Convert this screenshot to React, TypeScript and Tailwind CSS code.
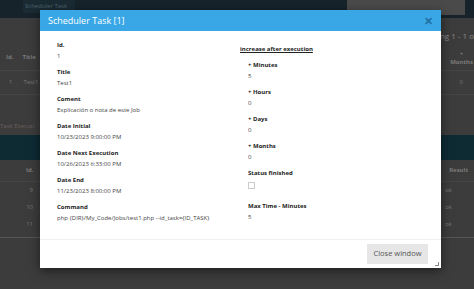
import React from 'react'

const leftFields = [
    { label: 'Id.', value: '1' },
    { label: 'Title', value: 'Test1' },
    { label: 'Coment', value: 'Explicación o nota de este Job' },
    { label: 'Date Initial', value: '10/23/2023 9:00:00 PM' },
    { label: 'Date Next Execution', value: '10/26/2023 6:33:00 PM' },
    { label: 'Date End', value: '11/23/2023 8:00:00 PM' },
    { label: 'Command', value: 'php {DIR}/My_Code/Jobs/test1.php --id_task={ID_TASK}' },
]

const rightFields = [
    { label: '+ Minutes', value: '5' },
    { label: '+ Hours', value: '0' },
    { label: '+ Days', value: '0' },
    { label: '+ Months', value: '0' },
]

const Field = ({ label, value }: { label: string; value: string }) => (
    <div className="flex flex-col">
        <span className="text-[6px] leading-[11px] font-bold text-[#222]">{label}</span>
        <span className="text-[6px] leading-[11px] text-[#444]">{value}</span>
    </div>
)

const Background = () => (
    <div className="h-[289px] w-[474px] bg-[#3c3c3c] text-[7px] text-[#8a8a8a] overflow-hidden">
        <div className="h-[18px] bg-[#16232a] flex items-start">
            <div className="ml-[23px] h-[13px] w-[52px] bg-[#1b2b33] text-[#4d6370] text-[6px] leading-[13px] px-[2px]">Scheduler Task</div>
            <div className="ml-auto mr-[9px] h-[15px] w-[118px] bg-[#4a4a4a]"></div>
        </div>
        <div className="flex justify-end pt-[12px] text-[8px] text-[#888]">
            <span>ng 1 - 1 o</span>
        </div>
        <div className="mt-[8px] flex justify-between border-b border-[#454545] pb-[4px] text-[6px] font-bold text-[#7a7a7a]">
            <div className="flex gap-[9px] pl-[6px] pt-[3px]"><span>Id.</span><span>Title</span></div>
            <div className="text-center leading-[8px] mr-[1px]">+<br />Months</div>
        </div>
        <div className="flex justify-between h-[24px] items-center border-b border-[#454545] text-[6px] text-[#777]">
            <div className="flex gap-[11px] pl-[9px]"><span>1</span><span>Test1</span></div>
            <span className="mr-[11px]">0</span>
        </div>
        <div className="mt-[27px] text-[6px] text-[#6f5f5f]">Task Executi</div>
        <div className="mt-[4px] h-[25px] bg-[#0e2a33]"></div>
        <div className="flex justify-between h-[22px] items-center border-b border-[#454545] text-[6px] font-bold text-[#7a7a7a]">
            <span className="pl-[26px]">Id.</span>
            <span className="mr-[6px]">Result</span>
        </div>
        {['9', '10', '11'].map((n) => (
            <div key={n} className="flex justify-between h-[17px] items-center text-[6px] text-[#777]">
                <span className="w-[33px] text-right">{n}</span>
                <span className="mr-[22px]">ok</span>
            </div>
        ))}
        <div className="mt-[4px] border-b border-[#555]"></div>
    </div>
)

const App = () => {
    return (
        <div className="relative w-[474px] h-[289px] overflow-hidden" style={{ fontFamily: '"Open Sans", "Liberation Sans", sans-serif' }}>
            <Background />
            <div className="absolute left-[40px] top-[10px] w-[401px] h-[258px] bg-white flex flex-col shadow-[0_3px_10px_rgba(0,0,0,0.5)]">
                <div className="h-[21px] bg-[#39a7e6] flex items-center justify-between pl-[8px] pr-[8px]">
                    <span className="text-white text-[9px]">Scheduler Task [1]</span>
                    <span className="text-[#1f6fa3] text-[11px] font-bold leading-none">✕</span>
                </div>
                <div className="flex-1 flex pl-[17px] pt-[9px]">
                    <div className="w-[183px] flex flex-col gap-[5px]">
                        {leftFields.map((f) => <Field key={f.label} {...f} />)}
                    </div>
                    <div className="flex flex-col">
                        <span className="text-[6px] leading-[11px] font-bold text-[#222] underline mt-[4px]">increase after execution</span>
                        <div className="flex flex-col gap-[5px] pl-[8px] mt-[5px]">
                            {rightFields.map((f) => <Field key={f.label} {...f} />)}
                            <div className="flex flex-col">
                                <span className="text-[6px] leading-[11px] font-bold text-[#222]">Status finished</span>
                                <span className="mt-[3px] w-[7px] h-[7px] border border-[#ccc] bg-white"></span>
                            </div>
                            <div className="flex flex-col mt-[7px]">
                                <span className="text-[6px] leading-[11px] font-bold text-[#222]">Max Time - Minutes</span>
                                <span className="text-[6px] leading-[11px] text-[#444]">5</span>
                            </div>
                        </div>
                    </div>
                </div>
                <div className="relative h-[29px] border-t border-[#f0f0f0] flex items-center justify-end pr-[13px]">
                    <button className="h-[20px] w-[61px] bg-[#e6e6e6] text-[#555] text-[7.5px]">Close window</button>
                    <span className="absolute right-[2px] bottom-[2px] w-[4px] h-[4px] border-r border-b border-[#888]"></span>
                </div>
            </div>
        </div>
    )
}

export default App
